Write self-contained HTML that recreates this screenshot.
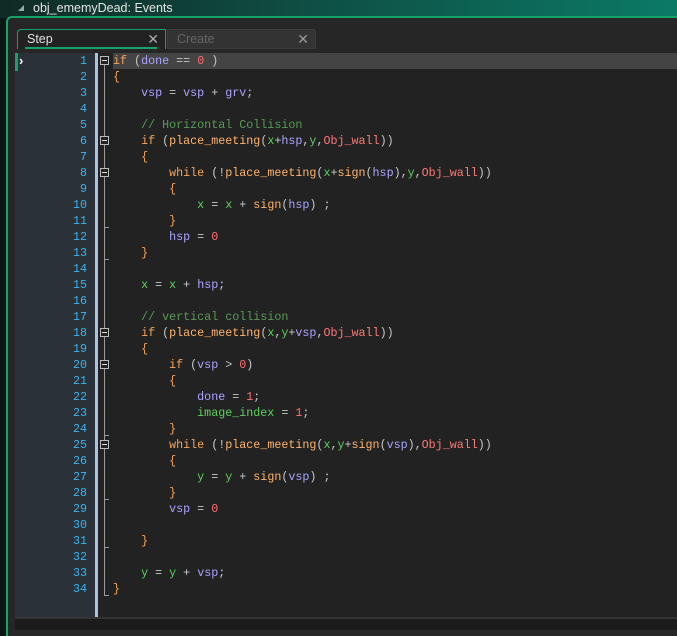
<!DOCTYPE html>
<html><head><meta charset="utf-8"><style>
*{margin:0;padding:0;box-sizing:border-box}
body{width:677px;height:630px;overflow:hidden;background:#0c1614;position:relative;font-family:"Liberation Sans",sans-serif}
#title{position:absolute;left:0;top:0;width:677px;height:18px;background:linear-gradient(90deg,#102a26 0%,#0f4a40 40%,#0b7a66 100%);}
#title span{position:absolute;left:33px;top:1px;color:#e6e6e6;font-size:12.5px}
#title i{position:absolute;left:18px;top:5px;width:0;height:0;border-left:6px solid transparent;border-bottom:6px solid #9aa}
#win{position:absolute;left:6px;top:16px;width:680px;height:620px;border:2px solid #14a36a;border-right:none;border-bottom:none;border-top-left-radius:6px;background:#262626}
.tab{position:absolute;top:29px;height:20px;width:149px;font-size:12.5px}
#t1{left:17px;background:#222;border:1px solid #14a36a;border-bottom:none;border-top-left-radius:4px;color:#e0e0e0}
#t1:after{content:"";position:absolute;left:7px;right:8px;bottom:0;height:2px;background:#14a36a}
#t2{left:167px;background:#333;border:1px solid #3c3c3c;color:#666;border-top-right-radius:3px}
.tab span{position:absolute;left:9px;top:2px}
.tab b{position:absolute;right:6px;top:1px;font-weight:normal;font-size:14px;color:#aaa}
#t2 b{color:#999}
#gut{position:absolute;left:15px;top:53px;width:80px;height:564px;background:#2b3138}
#gl{position:absolute;left:15px;top:53px;width:3px;height:18px;background:#14a36a}
#arrow{position:absolute;left:19px;top:53px;color:#fff;font-size:13px;font-weight:bold;line-height:16px}
#sep{position:absolute;left:95px;top:53px;width:3px;height:564px;background:#a7c4dc}
#code{position:absolute;left:98px;top:53px;width:579px;height:564px;background:#222}
#hl{position:absolute;left:113px;top:53px;width:564px;height:16px;background:#444}
#nums{position:absolute;left:20px;top:53px;width:67px;text-align:right;font-family:"Liberation Mono",monospace;font-size:11.7px;line-height:16px;color:#3cb4ee}
#src{position:absolute;left:113px;top:53px;font-family:"Liberation Mono",monospace;font-size:11.7px;line-height:16px;color:#c8c8c8;white-space:pre}
#fold{position:absolute;left:104px;top:61px;width:1px;height:535px;background:#9a9a9a}
.box{position:absolute;left:100px;width:9px;height:9px;border:1px solid #bbb;background:#222}
.box:after{content:"";position:absolute;left:1px;top:3px;width:5px;height:1px;background:#ddd}
.tick{position:absolute;left:104px;width:5px;height:1px;background:#9a9a9a}
#bot{position:absolute;left:15px;top:617px;width:662px;height:13px;background:#1b1b1b;border-top:2px solid #333}
.k{color:#f4a45a}.f{color:#ffb46e}.v{color:#aaa4ff}.g{color:#5ed25e}.n{color:#ff6e6e}.o{color:#ff7a7a}.c{color:#5a9a5a}
</style></head><body>
<div id="title"><i></i><span>obj_ememyDead: Events</span></div>
<div id="win"></div>
<div class="tab" id="t1"><span>Step</span><b>✕</b></div>
<div class="tab" id="t2"><span>Create</span><b>✕</b></div>
<div id="gut"></div><div id="gl"></div><div id="arrow">›</div>
<div id="sep"></div>
<div id="code"></div>
<div id="hl"></div>
<div id="nums">1<br>2<br>3<br>4<br>5<br>6<br>7<br>8<br>9<br>10<br>11<br>12<br>13<br>14<br>15<br>16<br>17<br>18<br>19<br>20<br>21<br>22<br>23<br>24<br>25<br>26<br>27<br>28<br>29<br>30<br>31<br>32<br>33<br>34</div>
<div id="fold"></div>
<div class="box" style="top:56px"></div>
<div class="box" style="top:136px"></div>
<div class="box" style="top:168px"></div>
<div class="box" style="top:328px"></div>
<div class="box" style="top:360px"></div>
<div class="box" style="top:440px"></div>
<div class="tick" style="top:227px"></div>
<div class="tick" style="top:259px"></div>
<div class="tick" style="top:435px"></div>
<div class="tick" style="top:499px"></div>
<div class="tick" style="top:547px"></div>
<div class="tick" style="top:595px"></div>
<div id="src"><span class="k">if</span> (<span class="v">done</span> == <span class="n">0</span> )
<span class="k">{</span>
    <span class="v">vsp</span> = <span class="v">vsp</span> + <span class="v">grv</span>;

    <span class="c">// Horizontal Collision</span>
    <span class="k">if</span> (<span class="f">place_meeting</span>(<span class="g">x</span>+<span class="v">hsp</span>,<span class="g">y</span>,<span class="o">Obj_wall</span>))
    <span class="k">{</span>
        <span class="k">while</span> (!<span class="f">place_meeting</span>(<span class="g">x</span>+<span class="f">sign</span>(<span class="v">hsp</span>),<span class="g">y</span>,<span class="o">Obj_wall</span>))
        <span class="k">{</span>
            <span class="g">x</span> = <span class="g">x</span> + <span class="f">sign</span>(<span class="v">hsp</span>) ;
        <span class="k">}</span>
        <span class="v">hsp</span> = <span class="n">0</span>
    <span class="k">}</span>

    <span class="g">x</span> = <span class="g">x</span> + <span class="v">hsp</span>;

    <span class="c">// vertical collision</span>
    <span class="k">if</span> (<span class="f">place_meeting</span>(<span class="g">x</span>,<span class="g">y</span>+<span class="v">vsp</span>,<span class="o">Obj_wall</span>))
    <span class="k">{</span>
        <span class="k">if</span> (<span class="v">vsp</span> &gt; <span class="n">0</span>)
        <span class="k">{</span>
            <span class="v">done</span> = <span class="n">1</span>;
            <span class="g">image_index</span> = <span class="n">1</span>;
        <span class="k">}</span>
        <span class="k">while</span> (!<span class="f">place_meeting</span>(<span class="g">x</span>,<span class="g">y</span>+<span class="f">sign</span>(<span class="v">vsp</span>),<span class="o">Obj_wall</span>))
        <span class="k">{</span>
            <span class="g">y</span> = <span class="g">y</span> + <span class="f">sign</span>(<span class="v">vsp</span>) ;
        <span class="k">}</span>
        <span class="v">vsp</span> = <span class="n">0</span>

    <span class="k">}</span>

    <span class="g">y</span> = <span class="g">y</span> + <span class="v">vsp</span>;
<span class="k">}</span></div>
<div id="bot"></div>
</body></html>
